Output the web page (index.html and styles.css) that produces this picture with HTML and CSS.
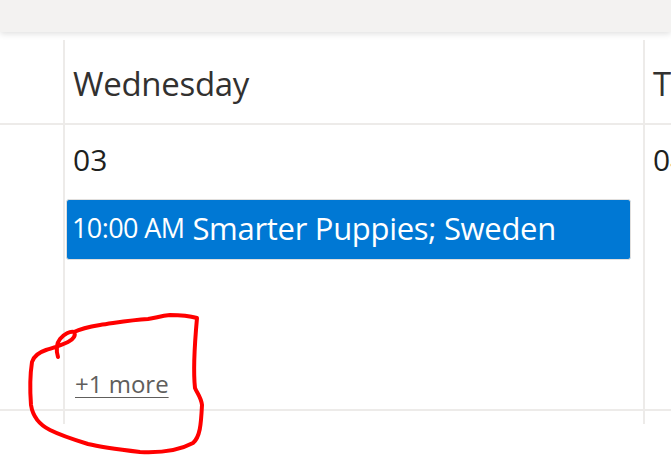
FILE: index.html
```html
<!DOCTYPE html>
<html>
<head>
<meta charset="utf-8">
<link rel="stylesheet" href="styles.css">
</head>
<body>
<div class="topbar"></div>
<div class="grid">
  <div class="cell gutter head"></div>
  <div class="cell day head"><span class="dayname">Wednesday</span></div>
  <div class="cell next head"><span class="dayname">Thursday</span></div>

  <div class="cell gutter body"></div>
  <div class="cell day body">
    <div class="date">03</div>
    <div class="event"><span class="time">10:00 AM</span> <span class="title">Smarter Puppies; Sweden</span></div>
    <div class="spacer"></div>
    <a class="more" href="#">+1 more</a>
  </div>
  <div class="cell next body"><div class="date">04</div></div>

  <div class="cell gutter tail"></div>
  <div class="cell day tail"></div>
  <div class="cell next tail"></div>
</div>
<svg class="scribble" width="671" height="456" viewBox="0 0 671 456">
  <path d="M58 357 C56 350 56 344 60 339 C64 334 70 331 74 332 C76 335 74 339 68 342 C60 346 52 348 46 350 C40 352 34 355 32 362 C30 375 30 392 31 405 C33 418 40 425 50 430 C62 436 75 440 88 444 C100 447 115 449 140 452 C160 453 180 450 193 443 C200 437 201 425 202 405 C201 397 197 393 195 388 C193 370 195 340 197 318 C190 316 182 315 170 315 C160 316 156 318 148 319 C130 320 115 323 100 325 C88 327 80 329 74 332"
    fill="none" stroke="#ff0000" stroke-width="4" stroke-linecap="round" stroke-linejoin="round"/>
</svg>
</body>
</html>
```
FILE: styles.css
```css
html, body {
  margin: 0;
  padding: 0;
  background: #ffffff;
  width: 671px;
  height: 456px;
  overflow: hidden;
  font-family: "Open Sans", "Noto Sans", sans-serif;
  color: #323130;
}

.topbar {
  height: 32px;
  background: #f3f2f1;
  box-shadow: 0 2px 6px rgba(0, 0, 0, 0.12);
  position: relative;
  z-index: 1;
}

.grid {
  margin-top: 8px;
  display: grid;
  grid-template-columns: 65px 580px 100px;
  grid-template-rows: 85px 286px 13px;
  overflow: hidden;
}

.cell {
  border-right: 2px solid #edebe9;
  box-sizing: border-box;
  overflow: hidden;
}

.head,
.body {
  border-bottom: 2px solid #edebe9;
}

.day,
.next {
  padding-left: 8px;
}

.head {
  display: flex;
  align-items: center;
  padding-top: 4px;
}

.dayname {
  font-size: 33px;
  color: #323130;
  letter-spacing: -0.3px;
  white-space: nowrap;
}

.body {
  display: flex;
  flex-direction: column;
  padding-top: 16px;
}

.day.body {
  padding-left: 0;
}

.date {
  font-size: 30px;
  line-height: 38px;
  color: #201f1e;
}

.day .date {
  padding-left: 8px;
}

.event {
  margin: 20px 0 0 1px;
  width: 565px;
  height: 61px;
  box-sizing: border-box;
  background: #0078d4;
  border: 1px solid #e1dfdd;
  border-radius: 3px;
  color: #ffffff;
  display: flex;
  align-items: center;
  gap: 8px;
  padding-left: 5px;
  padding-bottom: 4px;
  white-space: nowrap;
}

.time {
  font-size: 27px;
  letter-spacing: -0.6px;
}

.title {
  font-size: 31px;
  letter-spacing: -0.3px;
}

.spacer {
  flex: 1;
}

.more {
  margin: 0 0 10px 10px;
  font-size: 24px;
  line-height: 30px;
  color: #605e5c;
  text-decoration: underline;
  text-underline-offset: 4px;
  text-decoration-thickness: 1px;
}

.scribble {
  position: absolute;
  left: 0;
  top: 0;
  pointer-events: none;
}
```
